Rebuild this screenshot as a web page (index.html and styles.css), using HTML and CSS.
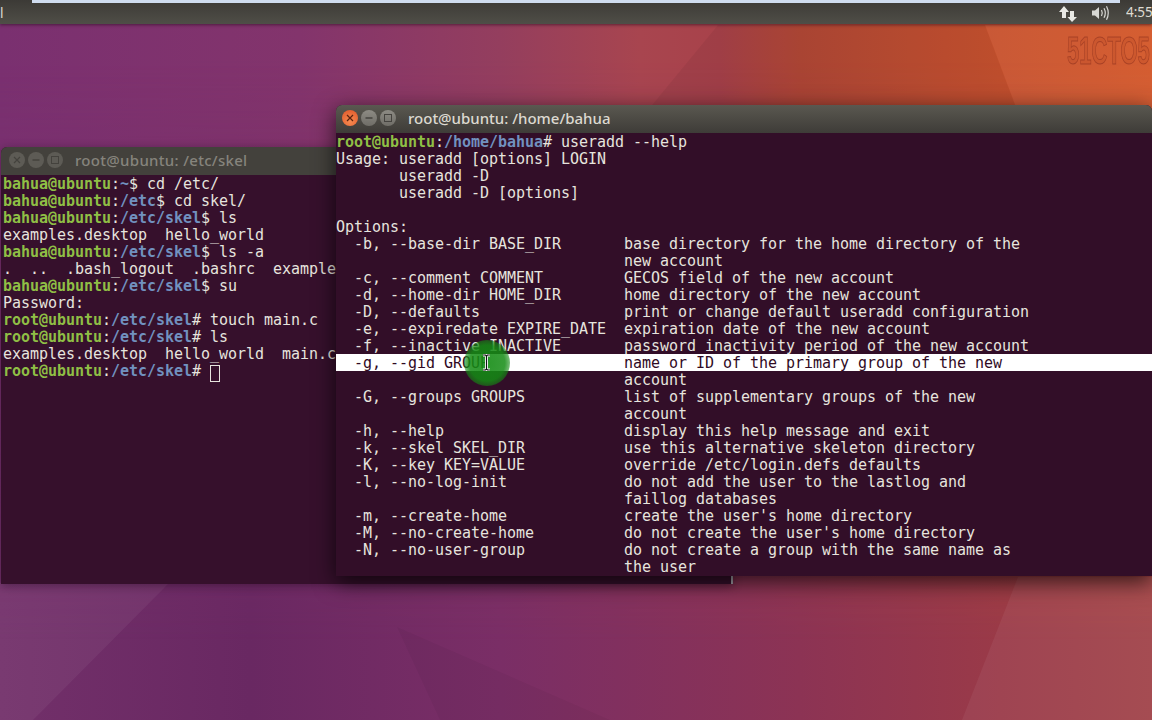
FILE: index.html
```html
<!DOCTYPE html>
<html lang="en">
<head>
<meta charset="utf-8">
<title>Ubuntu desktop</title>
<link rel="stylesheet" href="styles.css">
</head>
<body>
<div class="desktop">
  <svg class="facets" width="1152" height="720" viewBox="0 0 1152 720">
    <polygon points="718,25 648,110 1017,110 985,25" fill="#000" opacity=".05"/>
    <polygon points="985,25 1152,25 1152,110 1017,110" fill="#fff" opacity=".035"/>
    <polygon points="1018,577 962,720 1152,720 1152,577" fill="#fff" opacity=".055"/>
    <polygon points="169,583 33,720 0,720 0,583" fill="#fff" opacity=".05"/>
    <polygon points="397,627 610,720 440,720" fill="#000" opacity=".04"/>
  </svg>
  <header class="panel">
    <div class="panel-strip"></div>
    <div class="panel-row">
      <span class="panel-left">l</span>
      <div class="panel-right">
        <svg class="ico-net" width="20" height="18" viewBox="0 0 20 18"><path d="M6 1 L11 7 H8 V13 H4 V7 H1 Z M12 6 H16 V12 H19 L14 17 L9.5 12 H12 Z" fill="#e8e8e4"/></svg>
        <svg class="ico-vol" width="20" height="16" viewBox="0 0 20 16"><path d="M1 5.5 H4 L8 2 V14 L4 10.5 H1 Z" fill="#d8d8d4"/><path d="M10.5 5 Q12 8 10.5 11 M13 3.2 Q15.6 8 13 12.8 M15.5 1.2 Q19 8 15.5 14.8" fill="none" stroke="#d8d8d4" stroke-width="1.2"/></svg>
        <span class="clock">4:55</span>
      </div>
    </div>
  </header>
  <div class="watermark">51CTO5</div>

  <section class="win win-back">
    <div class="titlebar">
      <span class="btn btn-dim"><svg width="8" height="8" viewBox="0 0 8 8"><path d="M1 1 L7 7 M7 1 L1 7" stroke="#44423d" stroke-width="1.2"/></svg></span>
      <span class="btn btn-dim"><svg width="8" height="8" viewBox="0 0 8 8"><path d="M0.5 4 H7.5" stroke="#44423d" stroke-width="1.4"/></svg></span>
      <span class="btn btn-dim"><svg width="8" height="8" viewBox="0 0 8 8"><rect x="0.5" y="0.5" width="7" height="7" fill="none" stroke="#44423d"/></svg></span>
      <span class="title">root@ubuntu: /etc/skel</span>
    </div>
<pre class="term"><b class="g">bahua@ubuntu</b>:<b class="p">~</b>$ cd /etc/
<b class="g">bahua@ubuntu</b>:<b class="p">/etc</b>$ cd skel/
<b class="g">bahua@ubuntu</b>:<b class="p">/etc/skel</b>$ ls
examples.desktop  hello_world
<b class="g">bahua@ubuntu</b>:<b class="p">/etc/skel</b>$ ls -a
.  ..  .bash_logout  .bashrc  examples.desktop
<b class="g">bahua@ubuntu</b>:<b class="p">/etc/skel</b>$ su
Password:
<b class="g">root@ubuntu</b>:<b class="p">/etc/skel</b># touch main.c
<b class="g">root@ubuntu</b>:<b class="p">/etc/skel</b># ls
examples.desktop  hello_world  main.c
<b class="g">root@ubuntu</b>:<b class="p">/etc/skel</b># <i class="cursor"> </i></pre>
    <div class="scroll-stub"></div>
  </section>

  <section class="win win-front">
    <div class="titlebar">
      <span class="btn btn-close"><svg width="8" height="8" viewBox="0 0 8 8"><path d="M1 1 L7 7 M7 1 L1 7" stroke="#5a2210" stroke-width="1.2"/></svg></span>
      <span class="btn btn-gray"><svg width="8" height="8" viewBox="0 0 8 8"><path d="M0.5 4 H7.5" stroke="#45433f" stroke-width="1.4"/></svg></span>
      <span class="btn btn-gray"><svg width="8" height="8" viewBox="0 0 8 8"><rect x="0.5" y="0.5" width="7" height="7" fill="none" stroke="#45433f"/></svg></span>
      <span class="title title-on">root@ubuntu: /home/bahua</span>
    </div>
<pre class="term"><b class="g">root@ubuntu</b>:<b class="p">/home/bahua</b># useradd --help
Usage: useradd [options] LOGIN
       useradd -D
       useradd -D [options]

Options:
  -b, --base-dir BASE_DIR       base directory for the home directory of the
                                new account
  -c, --comment COMMENT         GECOS field of the new account
  -d, --home-dir HOME_DIR       home directory of the new account
  -D, --defaults                print or change default useradd configuration
  -e, --expiredate EXPIRE_DATE  expiration date of the new account
  -f, --inactive INACTIVE       password inactivity period of the new account
<span class="hl">  -g, --gid GROUP               name or ID of the primary group of the new</span>                                account
  -G, --groups GROUPS           list of supplementary groups of the new
                                account
  -h, --help                    display this help message and exit
  -k, --skel SKEL_DIR           use this alternative skeleton directory
  -K, --key KEY=VALUE           override /etc/login.defs defaults
  -l, --no-log-init             do not add the user to the lastlog and
                                faillog databases
  -m, --create-home             create the user's home directory
  -M, --no-create-home          do not create the user's home directory
  -N, --no-user-group           do not create a group with the same name as
                                the user</pre>
  </section>

  <div class="click-halo"></div>
  <svg class="ibeam" width="9" height="17" viewBox="0 0 9 17"><path d="M1 1 H3.5 L4.5 2 L5.5 1 H8 M4.5 2 V15 M1 16 H3.5 L4.5 15 L5.5 16 H8" fill="none" stroke="#fff" stroke-width="3"/><path d="M1 1 H3.5 L4.5 2 L5.5 1 H8 M4.5 2 V15 M1 16 H3.5 L4.5 15 L5.5 16 H8" fill="none" stroke="#111" stroke-width="1.2"/></svg>
</div>
</body>
</html>
```
FILE: styles.css
```css
html, body { margin: 0; padding: 0; }
body { width: 1152px; height: 720px; overflow: hidden; background: #3a1535; }

.desktop {
  position: relative;
  width: 1152px;
  height: 720px;
  overflow: hidden;
  background: linear-gradient(90deg, #72306a 0, #692862 250px, #7a2e66 500px, #8c3354 800px, #9a3a48 1000px, #a04248 1152px);
}
.desktop::before {
  content: "";
  position: absolute;
  inset: 0;
  background: linear-gradient(90deg, #7a3070 0, #83346c 300px, #943e5e 500px, #a8454f 640px, #a8424a 720px, #b34836 800px, #c9532f 1000px, #d4592a 1152px);
  -webkit-mask-image: linear-gradient(180deg, #000 0, #000 60px, transparent 640px);
  mask-image: linear-gradient(180deg, #000 0, #000 60px, transparent 640px);
}
.facets { position: absolute; left: 0; top: 0; }

.panel {
  position: relative;
  z-index: 5;
  height: 24px;
  background: linear-gradient(#3c3a36, #4f4e47);
  box-shadow: 0 1px 3px rgba(40,10,30,.6);
  color: #dfdbd2;
  font: 13.5px "Noto Sans", sans-serif;
}
.panel-strip {
  height: 3px;
  margin: 0 0 0 32px;
  width: 1088px;
  background: #cfdcef;
}
.panel-row {
  display: flex;
  align-items: center;
  justify-content: space-between;
  height: 21px;
}
.panel-left { margin-top: -2px; }
.panel-right { display: flex; align-items: center; }
.ico-net { margin-right: 13px; }
.ico-vol { margin-right: 15px; margin-top: -1px; }
.clock { width: 26px; overflow: hidden; white-space: nowrap; margin-top: -3px; }

.watermark {
  position: absolute;
  z-index: 1;
  left: 1067px;
  top: 29px;
  font: bold 39px "Liberation Sans", sans-serif;
  white-space: nowrap;
  color: rgba(190,75,40,.3);
  -webkit-text-stroke: 1px rgba(120,35,25,.45);
  transform: scaleX(.565);
  transform-origin: left top;
}

.win {
  position: absolute;
  z-index: 2;
  border-radius: 6px 6px 0 0;
  overflow: hidden;
}
.win-back {
  left: 1px; top: 147px; width: 732px; height: 437px;
  box-shadow: 0 2px 10px rgba(20,0,20,.4);
  background: #36102c;
}
.win-front {
  left: 336px; top: 105px; width: 816px; height: 471px;
  z-index: 3;
  background: #320e28;
  box-shadow: 0 6px 22px rgba(0,0,0,.7);
}
.titlebar {
  display: flex;
  align-items: center;
  height: 28px;
  padding: 0 0 2px 8px;
  gap: 3px;
  box-sizing: border-box;
  background: #43413c;
}
.win-front .titlebar { padding-left: 6px; background: linear-gradient(#5a5850, #3e3c38); }
.btn {
  display: flex;
  align-items: center;
  justify-content: center;
  width: 16px;
  height: 16px;
  border-radius: 50%;
  box-sizing: border-box;
}
.btn-close { background: radial-gradient(circle at 50% 70%, #f58a4f, #e0562a); }
.btn-gray { background: linear-gradient(#8d8b84, #6f6d67); }
.btn-dim { background: #5d5b55; }
.title {
  margin-left: 9px;
  font: 500 15px "Noto Sans", sans-serif;
  letter-spacing: .3px;
  color: #86847c;
}
.title-on { color: #dcd9d0; letter-spacing: 0; }

.term {
  margin: 0;
  padding: 1px 0 0 2px;
  font: 15px/17px "DejaVu Sans Mono", monospace;
  letter-spacing: -.03px;
  color: #e6e4de;
  white-space: pre;
}
.win-front .term { padding-left: 0; }
.term b { font-weight: bold; }
.g { color: #8fbf45; }
.p { color: #7191bf; font-weight: bold; }
.hl {
  display: block;
  height: 16px;
  padding-top: 1px;
  margin: -1px 0 1px;
  background: #fff;
  color: #300a24;
}
.cursor {
  display: inline-block;
  width: 8px;
  height: 15px;
  vertical-align: -3px;
  border: 1px solid #e6e4de;
}
.scroll-stub {
  position: absolute;
  right: 0;
  bottom: 0;
  width: 2px;
  height: 8px;
  background: #a8a4ac;
}

.click-halo {
  position: absolute;
  z-index: 4;
  left: 464px;
  top: 340px;
  width: 46px;
  height: 46px;
  border-radius: 50%;
  background: radial-gradient(circle, rgba(20,140,20,.9) 0%, rgba(20,140,20,.85) 55%, rgba(20,140,20,0) 100%);
}
.ibeam { position: absolute; z-index: 5; left: 482px; top: 354px; }
```
